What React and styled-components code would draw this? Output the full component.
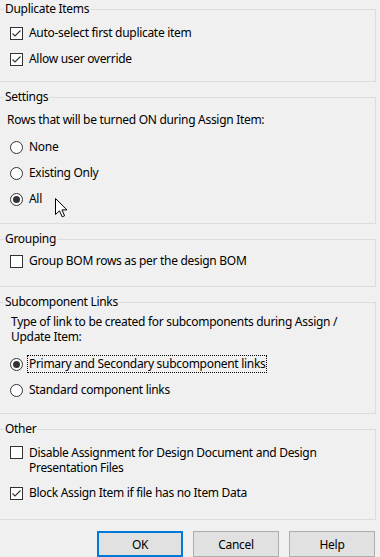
import React from "react";
import styled, { createGlobalStyle } from "styled-components";

const Global = createGlobalStyle`
  html, body { margin: 0; padding: 0; background: #f0f0f0; }
  * { box-sizing: border-box; }
`;

const Window = styled.div`
  position: relative;
  width: 380px;
  height: 557px;
  overflow: hidden;
  background: #f0f0f0;
  font-family: "Noto Sans", "Open Sans", sans-serif;
  font-size: 12px;
  letter-spacing: -0.3px;
  color: #000;
  padding-top: 1px;
`;

const Stack = styled.div`
  display: flex;
  flex-direction: column;
  gap: 7px;
  margin-left: -3px;
  width: 379px;
`;

const Group = styled.fieldset`
  margin: 0;
  padding: ${(p) => p.$pt}px 0 ${(p) => p.$pb}px 0;
  border: 1px solid #dcdcdc;
  display: flex;
  flex-direction: column;
  gap: 10px;
  min-width: 0;
`;

const Legend = styled.legend`
  margin-left: 6px;
  padding: 0 1px;
  line-height: 16px;
  height: 16px;
`;

const Caption = styled.div`
  line-height: 15px;
  padding-left: ${(p) => p.$indent}px;
  padding-right: 20px;
  margin-bottom: 2px;
`;

const Row = styled.label`
  display: flex;
  align-items: flex-start;
  gap: 6px;
  padding-left: 12px;
  line-height: ${(p) => (p.$multi ? 15 : 16)}px;
`;

const BoxWrap = styled.span`
  flex: none;
  width: 13px;
  height: 13px;
  margin-top: ${(p) => (p.$multi ? 1 : 2)}px;
  border: 1px solid #333;
  background: #fff;
  display: flex;
  align-items: center;
  justify-content: center;
`;

const RadioWrap = styled.span`
  flex: none;
  width: 13px;
  height: 13px;
  margin-top: 2px;
  border: 1px solid #333;
  border-radius: 50%;
  background: #fff;
  display: flex;
  align-items: center;
  justify-content: center;
`;

const Dot = styled.span`
  width: 7px;
  height: 7px;
  border-radius: 50%;
  background: #333;
`;

const LabelText = styled.span`
  padding: 0 1px;
  margin-left: -1px;
  outline: ${(p) => (p.$focus ? "1px dotted #000" : "none")};
  outline-offset: 0;
`;

const Footer = styled.div`
  display: flex;
  justify-content: flex-end;
  gap: 10px;
  padding: 11px 5px 0 0;
`;

const Button = styled.button`
  width: 86px;
  height: 26px;
  font-family: inherit;
  font-size: 12px;
  letter-spacing: inherit;
  color: #000;
  background: #e1e1e1;
  border: ${(p) => (p.$default ? "2px solid #0078d7" : "1px solid #adadad")};
  padding: 0;
`;

const Cursor = styled.svg`
  position: absolute;
  left: 55px;
  top: 198px;
`;

function Check({ checked, multi }) {
  return (
    <BoxWrap $multi={multi}>
      {checked && (
        <svg width="11" height="11" viewBox="0 0 11 11">
          <path d="M1.5 5.5 L4 8 L9.5 2.5" fill="none" stroke="#333" strokeWidth="1.1" />
        </svg>
      )}
    </BoxWrap>
  );
}

function CheckRow({ checked, children, multi }) {
  return (
    <Row $multi={multi}>
      <Check checked={checked} multi={multi} />
      <LabelText>{children}</LabelText>
    </Row>
  );
}

function RadioRow({ checked, children, focus }) {
  return (
    <Row>
      <RadioWrap>{checked && <Dot />}</RadioWrap>
      <LabelText $focus={focus}>{children}</LabelText>
    </Row>
  );
}

export default function App() {
  return (
    <Window>
      <Global />
      <Stack>
        <Group $pt={8} $pb={14}>
          <Legend>Duplicate Items</Legend>
          <CheckRow checked>Auto-select first duplicate item</CheckRow>
          <CheckRow checked>Allow user override</CheckRow>
        </Group>
        <Group $pt={7} $pb={16}>
          <Legend>Settings</Legend>
          <Caption $indent={9}>Rows that will be turned ON during Assign Item:</Caption>
          <RadioRow>None</RadioRow>
          <RadioRow>Existing Only</RadioRow>
          <RadioRow checked>All</RadioRow>
        </Group>
        <Group $pt={6} $pb={17}>
          <Legend>Grouping</Legend>
          <CheckRow>Group BOM rows as per the design BOM</CheckRow>
        </Group>
        <Group $pt={4} $pb={15}>
          <Legend>Subcomponent Links</Legend>
          <Caption $indent={13}>
            Type of link to be created for subcomponents during Assign / Update Item:
          </Caption>
          <RadioRow checked focus>Primary and Secondary subcomponent links</RadioRow>
          <RadioRow>Standard component links</RadioRow>
        </Group>
        <Group $pt={8} $pb={18}>
          <Legend>Other</Legend>
          <CheckRow multi>
            Disable Assignment for Design Document and Design Presentation Files
          </CheckRow>
          <CheckRow checked>Block Assign Item if file has no Item Data</CheckRow>
        </Group>
      </Stack>
      <Footer>
        <Button $default>OK</Button>
        <Button>Cancel</Button>
        <Button>Help</Button>
      </Footer>
      <Cursor width="13" height="20" viewBox="0 0 13 20">
        <path
          d="M0.5 0.5 L0.5 16.5 L4.5 12.8 L7.2 18.8 L9.6 17.8 L7 11.9 L12 11.9 Z"
          fill="#fff"
          stroke="#000"
          strokeWidth="1"
          strokeLinejoin="miter"
        />
      </Cursor>
    </Window>
  );
}
